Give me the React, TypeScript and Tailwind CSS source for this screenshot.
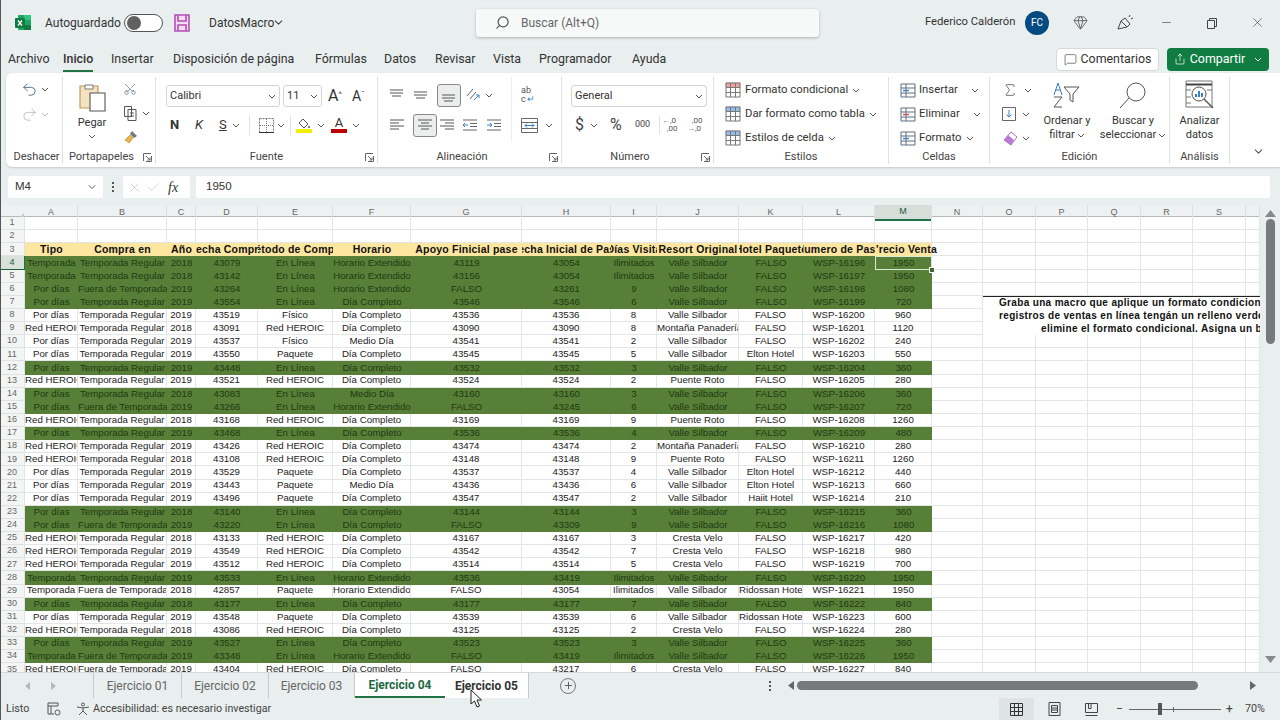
import React from "react";
import { Search, Undo2, Redo2, Scissors, Gem, Minus, X, Check, Sigma, ChevronDown, MessageSquare, Share, Plus } from "lucide-react";

const Ch = ({ c = "#555" }: { c?: string }) => (
  <svg width="8" height="5" viewBox="0 0 8 5" className="shrink-0"><path d="M1 1l3 3 3-3" fill="none" stroke={c} strokeWidth="1" /></svg>
);

const Lines = ({ w, xs, ys, c = "#555" }: { w: number[]; xs: number[]; ys: number[]; c?: string }) => (
  <svg width="16" height="16" viewBox="0 0 16 16">
    {ys.map((y, i) => <path key={i} d={`M${xs[i]} ${y}h${w[i]}`} stroke={c} strokeWidth="1" />)}
  </svg>
);

const Launcher = () => (
  <svg width="9" height="9" viewBox="0 0 9 9"><path d="M0.5 8V0.5H8M8.5 3v5.5H3M3 3l4 4M7 4.5V7H4.5" fill="none" stroke="#666" strokeWidth="1" /></svg>
);

const Group = ({ w, label, launcher, pr, children }: { w: string; label: string; launcher?: boolean; pr?: string; children?: React.ReactNode }) => (
  <div className={`${w} relative h-[87px] mt-[4px] shrink-0 flex flex-col border-r border-[#dfe3e3]`}>
    <div className="h-[73px] flex">{children}</div>
    <div className={`h-[14px] flex items-center justify-center text-[11px] text-[#444] ${pr ?? ""}`}>{label}</div>
    {launcher && <span className="absolute right-[3px] bottom-[2px] flex"><Launcher /></span>}
  </div>
);

const Sel = ({ w, text, cls }: { w: string; text: string; cls?: string }) => (
  <div className={`${w} ${cls ?? ""} h-[22px] flex items-center justify-between px-[3px] bg-white border border-[#d0d4d4] rounded-[3px] text-[11px] text-[#333]`}>
    <span>{text}</span><Ch />
  </div>
);

const colTemplate = "grid grid-cols-[25px_53px_89px_29px_62px_75px_78px_111px_89px_46px_82px_64px_72px_57px_51px_53px_52px_53px_52px_53px_14px]";

const cols = ["A", "B", "C", "D", "E", "F", "G", "H", "I", "J", "K", "L", "M", "N", "O", "P", "Q", "R", "S", ""];
const headers = ["Tipo", "Compra en", "Año", "Fecha Compra", "Método de Compra", "Horario", "Apoyo Finicial pase", "Fecha Inicial de Pase", "Días Visita", "Resort Original", "Hotel Paquete", "Numero de Pase"];

const A: Record<string, string> = { T: "Temporada", P: "Por días", H: "Red HEROIC" };
const B: Record<string, string> = { R: "Temporada Regular", F: "Fuera de Temporada" };
const E: Record<string, string> = { E: "En Línea", X: "Físico", H: "Red HEROIC", Q: "Paquete" };
const Fc: Record<string, string> = { H: "Horario Extendido", D: "Día Completo", M: "Medio Día" };
const J: Record<string, string> = { V: "Valle Silbador", M: "Montaña Panadería", P: "Puente Roto", C: "Cresta Velo" };
const K: Record<string, string> = { F: "FALSO", E: "Elton Hotel", H: "Haiit Hotel", R: "Ridossan Hotel" };

const raw = [
  "T|R|2018|43079|E|H|43119|43054|I|V|F|16196|1950|g",
  "T|R|2018|43142|E|H|43156|43054|I|V|F|16197|1950|g",
  "P|F|2019|43264|E|H|FALSO|43261|9|V|F|16198|1080|g",
  "P|R|2019|43554|E|D|43546|43546|6|V|F|16199|720|g",
  "P|R|2019|43519|X|D|43536|43536|8|V|F|16200|960|",
  "H|R|2018|43091|H|D|43090|43090|8|M|F|16201|1120|",
  "P|R|2019|43537|X|M|43541|43541|2|V|F|16202|240|",
  "P|R|2019|43550|Q|D|43545|43545|5|V|E|16203|550|",
  "P|R|2019|43448|E|D|43532|43532|3|V|F|16204|360|g",
  "H|R|2019|43521|H|D|43524|43524|2|P|F|16205|280|",
  "P|R|2018|43083|E|M|43160|43160|3|V|F|16206|360|g",
  "P|F|2019|43266|E|H|FALSO|43245|6|V|F|16207|720|g",
  "H|R|2018|43168|H|D|43169|43169|9|P|F|16208|1260|",
  "P|R|2019|43468|E|D|43536|43536|4|V|F|16209|480|g",
  "H|R|2019|43426|H|D|43474|43474|2|M|F|16210|280|",
  "H|R|2018|43108|H|D|43148|43148|9|P|F|16211|1260|",
  "P|R|2019|43529|Q|D|43537|43537|4|V|E|16212|440|",
  "P|R|2019|43443|Q|M|43436|43436|6|V|E|16213|660|",
  "P|R|2019|43496|Q|D|43547|43547|2|V|H|16214|210|",
  "P|R|2018|43140|E|D|43144|43144|3|V|F|16215|360|g",
  "P|F|2019|43220|E|D|FALSO|43309|9|V|F|16216|1080|g",
  "H|R|2018|43133|H|D|43167|43167|3|C|F|16217|420|",
  "H|R|2019|43549|H|D|43542|43542|7|C|F|16218|980|",
  "H|R|2019|43512|H|D|43514|43514|5|C|F|16219|700|",
  "T|R|2019|43533|E|H|43536|43419|I|V|F|16220|1950|g",
  "T|F|2018|42857|Q|H|FALSO|43054|I|V|R|16221|1950|",
  "P|R|2018|43177|E|D|43177|43177|7|V|F|16222|840|g",
  "P|R|2019|43548|Q|D|43539|43539|6|V|R|16223|600|",
  "H|R|2018|43086|H|D|43125|43125|2|C|F|16224|280|",
  "P|R|2019|43527|E|D|43523|43523|3|V|F|16225|360|g",
  "T|F|2019|43348|E|H|FALSO|43419|I|V|F|16226|1950|g",
  "H|F|2019|43404|H|D|FALSO|43217|6|C|F|16227|840|",
];

const expand = (s: string) => {
  const p = s.split("|");
  return {
    green: p[13] === "g",
    cells: [A[p[0]], B[p[1]], p[2], p[3], E[p[4]], Fc[p[5]], p[6], p[7], p[8] === "I" ? "Ilimitados" : p[8], J[p[9]], K[p[10]], "WSP-" + p[11], p[12]],
  };
};

const RowHead = ({ n, active }: { n: number; active?: boolean }) => (
  <div className={`flex items-center justify-center text-[9px] border-b border-r ${active ? "bg-[#d8e2da] border-r-[#217346] text-[#1f5c38]" : "bg-[#f3f5f5] border-[#dfe2e2] text-[#666]"}`}>{n}</div>
);

const Empty = () => <div className="border-r border-b border-[#e3e6e6]" />;

const Note = ({ text, pad, top }: { text: string; pad: string; top?: boolean }) => (
  <div className={`col-span-6 overflow-hidden whitespace-nowrap flex items-center ${pad} font-bold text-[10px] tracking-[0.34px] text-[#111] ${top ? "border-t-[1.5px] border-[#222]" : ""}`}>{text}</div>
);

const Sheet = () => {
  const emptyRight = Array.from({ length: 7 });
  return (
    <div className="w-[1260px] h-[467px] overflow-hidden bg-white [font-family:'Liberation_Sans',sans-serif] text-[9.7px] text-[#222]">
      <div className={`${colTemplate} h-[12px] bg-[#eef1f1] border-b-[1.5px] border-[#b5baba]`}>
        <div className="flex items-end justify-end pr-[1px] pb-[1px]"><svg width="7" height="7" viewBox="0 0 7 7"><path d="M7 0v7H0z" fill="#c5c9c9" /></svg></div>
        {cols.map((c, i) => (
          <div key={i} className={`flex items-center justify-center text-[9px] border-r border-[#dde0e0] ${c === "M" ? "bg-[#d5ded8] text-[#1f5c38] border-b-2 border-b-[#217346]" : "text-[#666]"}`}>{c}</div>
        ))}
      </div>
      <div className={`${colTemplate} auto-rows-[13.13px]`}>
        {[1, 2].map((n) => (
          <React.Fragment key={n}>
            <RowHead n={n} />
            {cols.map((_, i) => <Empty key={i} />)}
          </React.Fragment>
        ))}
        <RowHead n={3} />
        {headers.map((h) => (
          <div key={h} className="bg-[#fde6a0] overflow-hidden whitespace-nowrap flex items-center justify-center font-bold text-[10.5px] tracking-[0.2px] text-[#111]">{h}</div>
        ))}
        <div className="bg-[#fde6a0] whitespace-nowrap flex items-center pl-[1px] font-bold text-[10.5px] tracking-[0.2px] text-[#111]">'recio Venta</div>
        {emptyRight.map((_, i) => <Empty key={i} />)}
        {raw.map((s, r) => {
          const n = r + 4;
          const { green, cells } = expand(s);
          return (
            <React.Fragment key={n}>
              <RowHead n={n} active={n === 4} />
              {cells.map((c, i) => {
                const active = n === 4 && i === 12;
                return (
                  <div key={i} className={`relative flex items-center [justify-content:safe_center] whitespace-nowrap ${active ? "" : "overflow-hidden"} ${green ? "bg-[#587f38] text-[#1f3a12]" : "bg-white border-r border-b border-[#e3e6e6]"}`}>
                    {c}
                    {active && (
                      <>
                        <span className="absolute inset-0 border-[1.5px] border-[#dcecd4]" />
                        <span className="absolute z-10 -right-[3px] -bottom-[3px] w-[6px] h-[6px] bg-[#3c6a30] border border-white" />
                      </>
                    )}
                  </div>
                );
              })}
              {n === 7 ? (
                <>
                  <Empty />
                  <Note top pad="pl-[16px]" text="Graba una macro que aplique un formato condicional de forma que los" />
                </>
              ) : n === 8 ? (
                <>
                  <Empty />
                  <Note pad="pl-[16px]" text="registros de ventas en línea tengán un relleno verde oscuro y que" />
                </>
              ) : n === 9 ? (
                <>
                  <Empty />
                  <Note pad="pl-[58px]" text="elimine el formato condicional. Asigna un botón" />
                </>
              ) : (
                emptyRight.map((_, i) => <Empty key={i} />)
              )}
            </React.Fragment>
          );
        })}
      </div>
    </div>
  );
};

const TitleBar = () => (
  <div className="h-[45px] flex items-center text-[12px] text-[#333]">
    <div className="w-[45px] pl-[15px] flex">
      <svg width="16" height="17" viewBox="0 0 16 17">
        <rect x="3" y="1" width="13" height="15" rx="1" fill="#21a366" />
        <rect x="9" y="1" width="7" height="5" fill="#33c481" />
        <rect x="9" y="11" width="7" height="5" fill="#107c41" />
        <rect x="0" y="4" width="10" height="10" rx="1" fill="#107c41" />
        <path d="M3 6.5l4 5M7 6.5l-4 5" stroke="#fff" strokeWidth="1.3" />
      </svg>
    </div>
    <div className="w-[79px]">Autoguardado</div>
    <div className="w-[39px] h-[18px] rounded-full border border-[#555] bg-white flex items-center pl-[2px]">
      <span className="w-[14px] h-[14px] rounded-full bg-[#606060]" />
    </div>
    <div className="ml-[11px] w-[35px] flex">
      <svg width="16" height="18" viewBox="0 0 16 18" fill="none" stroke="#b44fb4" strokeWidth="1.6">
        <path d="M1 1h14v16H1z" fill="#f3dcf3" />
        <path d="M4 1v6h8V1M4 17v-6h8v6" />
      </svg>
    </div>
    <div className="w-[69px]">DatosMacro</div>
    <ChevronDown size={13} color="#444" className="-ml-[6px]" />
    <div className="ml-[191px] w-[343px] h-[28px] bg-[#f7f9f9] rounded-[3px] shadow-[0_1px_3px_rgba(0,0,0,0.25)] flex items-center pl-[19px] text-[#666]">
      <Search size={15} color="#555" className="-scale-x-100" />
      <span className="ml-[11px]">Buscar (Alt+Q)</span>
    </div>
    <div className="ml-[106px] w-[100px] text-[11.2px]">Federico Calderón</div>
    <div className="w-[24px] h-[24px] rounded-full bg-[#054a80] text-white text-[10px] flex items-center justify-center">FC</div>
    <div className="ml-[24px] w-[43px] flex"><Gem size={15} color="#444" strokeWidth={1.2} /></div>
    <div className="w-[44px] flex">
      <svg width="18" height="18" viewBox="0 0 18 18" fill="none" stroke="#444" strokeWidth="1"><path d="M2 15l3-8 6 6zM5 7l4-3 5 6-3 3M13 3l1-2M15 5l2-1" /></svg>
    </div>
    <div className="w-[46px] flex"><Minus size={13} color="#444" strokeWidth={1.2} /></div>
    <div className="w-[44px] flex">
      <svg width="12" height="12" viewBox="0 0 12 12" fill="none" stroke="#444" strokeWidth="1"><path d="M1.5 3.5h7v8h-7zM3.5 3.5v-2h7v8h-2" /></svg>
    </div>
    <div className="flex"><X size={15} color="#444" strokeWidth={1.1} /></div>
  </div>
);

const tabs: [string, string][] = [
  ["Archivo", "w-[55px]"], ["Inicio", "w-[48px]"], ["Insertar", "w-[62px]"], ["Disposición de página", "w-[142px]"], ["Fórmulas", "w-[69px]"],
  ["Datos", "w-[51px]"], ["Revisar", "w-[58px]"], ["Vista", "w-[46px]"], ["Programador", "w-[93px]"], ["Ayuda", "w-[45px]"],
];

const TabBar = () => (
  <div className="h-[28px] flex items-center pl-[8px] text-[12.4px] text-[#333]">
    {tabs.map(([t, w]) => (
      <div key={t} className={`${w} h-full flex items-center relative`}>
        <span className={t === "Inicio" ? "border-b-2 border-[#217346] pb-[2px] mt-[4px] font-medium" : ""}>{t}</span>
      </div>
    ))}
    <div className="ml-auto w-[103px] h-[23px] bg-white border border-[#d5d9d9] rounded-[4px] flex items-center justify-center gap-[4px]">
      <MessageSquare size={13} color="#444" strokeWidth={1.2} /><span>Comentarios</span>
    </div>
    <div className="ml-[8px] mr-[11px] w-[102px] h-[23px] bg-[#107c41] text-white rounded-[4px] flex items-center justify-center gap-[4px]">
      <Share size={12} color="#fff" strokeWidth={1.4} /><span>Compartir</span><span className="ml-[5px] flex"><Ch c="#fff" /></span>
    </div>
  </div>
);

const ICol = ({ children, cls }: { children: React.ReactNode; cls?: string }) => <div className={`flex flex-col ${cls ?? ""}`}>{children}</div>;

const Ribbon = () => (
  <div className="ml-[6px] h-[94px] bg-white rounded-l-[6px] shadow-[0_1px_2px_rgba(0,0,0,0.15)] flex text-[11px] text-[#333] shrink-0">
    <Group w="w-[57px]" label="Deshacer" pr="pl-[5px]">
      <ICol cls="pl-[15px]">
        <div className="h-[22px] mt-[1px] flex items-center gap-[3px]"><Undo2 size={17} color="#44627a" strokeWidth={1.2} /><Ch /></div>
        <div className="h-[22px] mt-[3px] flex items-center gap-[3px]"><Redo2 size={17} color="#b5b9b9" strokeWidth={1.2} /><Ch c="#bbb" /></div>
      </ICol>
    </Group>
    <Group w="w-[93px]" label="Portapapeles" launcher pr="pr-[15px]">
      <div className="w-[58px] flex flex-col items-center">
        <svg width="27" height="30" viewBox="0 0 27 30" fill="none" className="mt-[5px]">
          <path d="M1 4h18v22H1z" fill="#f5e3c0" stroke="#c09a5c" strokeWidth="1.2" />
          <path d="M6 3h8v4H6z" fill="#fff" stroke="#777" />
          <path d="M11 11h15v18H11z" fill="#fff" stroke="#555" strokeWidth="1.1" />
        </svg>
        <span className="mt-[3px]">Pegar</span>
        <span className="mt-[2px] flex"><Ch /></span>
      </div>
      <ICol cls="pl-[2px] items-start">
        <div className="h-[24px] flex items-center"><Scissors size={14} color="#5a6e82" strokeWidth={1.2} className="-rotate-90" /></div>
        <div className="h-[24px] flex items-center gap-[4px]">
          <svg width="15" height="16" viewBox="0 0 15 16" fill="none" stroke="#555"><path d="M1.5 1.5h7v10h-7zM5 4.5h8v11H5z" fill="#fff" /><path d="M7 8h4M7 11h4" /></svg>
          <Ch />
        </div>
        <div className="h-[24px] flex items-center">
          <svg width="16" height="16" viewBox="0 0 16 16"><path d="M9 2l5 5-3 2-4-4z" fill="#777" /><path d="M7 6l3 3-4 5-4-3z" fill="#e8b84a" stroke="#a9802c" strokeWidth=".6" /></svg>
        </div>
      </ICol>
    </Group>
    <Group w="w-[222px]" label="Fuente" launcher>
      <ICol cls="pl-[10px]">
        <div className="mt-[8px] h-[22px] flex items-center">
          <Sel w="w-[114px]" text="Calibri" />
          <Sel w="w-[39px]" text="11" cls="ml-[3px]" />
          <span className="ml-[6px] w-[24px] text-[16px] text-[#333] leading-none">A<sup className="text-[8px]">^</sup></span>
          <span className="text-[14px] text-[#333] leading-none">A<sup className="text-[8px]">ˇ</sup></span>
        </div>
        <div className="mt-[7px] h-[22px] flex items-center text-[13px] text-[#333]">
          <span className="w-[25px] pl-[4px] font-bold">N</span>
          <span className="w-[25px] pl-[4px] italic">K</span>
          <span className="w-[16px] pl-[3px] underline">S</span><span className="w-[15px] flex"><Ch /></span>
          <span className="w-[10px] h-[20px] border-l border-[#dfe3e3] ml-[2px]" />
          <svg width="15" height="15" viewBox="0 0 15 15" fill="none" stroke="#777"><path d="M.5.5h14v14H.5z" strokeDasharray="2 1" /><path d="M7.5 1v13M1 7.5h13" strokeDasharray="1 1" /><path d="M0 14.5h15" stroke="#333" /></svg>
          <span className="ml-[3px] w-[13px] flex"><Ch /></span>
          <span className="w-[6px] h-[20px] border-l border-[#dfe3e3]" />
          <span className="flex flex-col items-center w-[16px]">
            <svg width="14" height="11" viewBox="0 0 14 11" fill="none" stroke="#555"><path d="M6 1l5 5-4 4-5-5z" /><path d="M12 8v2" strokeWidth="1.5" /></svg>
            <span className="w-[16px] h-[4px] bg-[#f3f000]" />
          </span>
          <span className="ml-[5px] w-[14px] flex"><Ch /></span>
          <span className="flex flex-col items-center w-[16px] leading-none">
            <span className="text-[13px] leading-[12px]">A</span>
            <span className="w-[16px] h-[4px] bg-[#c00000]" />
          </span>
          <span className="ml-[5px] flex"><Ch /></span>
        </div>
      </ICol>
    </Group>
    <Group w="w-[184px]" label="Alineación" launcher pr="pr-[15px]">
      <ICol cls="pl-[11px] w-[134px] border-r border-[#eceeee] h-[65px]">
        <div className="mt-[7px] h-[22px] flex items-center">
          <span className="w-[24px] flex"><Lines w={[13, 13, 9]} xs={[1, 1, 3]} ys={[3, 6, 9]} /></span>
          <span className="w-[24px] flex"><Lines w={[13, 13, 9]} xs={[1, 1, 3]} ys={[5, 8, 11]} /></span>
          <span className="w-[24px] h-[23px] flex items-center justify-center bg-[#eceeee] border border-[#888] rounded-[3px]"><Lines w={[13, 13, 9]} xs={[1, 1, 3]} ys={[8, 11, 14]} /></span>
          <span className="ml-[4px] w-[20px] flex">
            <svg width="16" height="16" viewBox="0 0 16 16" fill="none" stroke="#666"><path d="M2 9l6-7M5 12l6-7" /><path d="M9 13l5-5M14 8v3M14 8h-3" stroke="#3a80c4" /></svg>
          </span>
          <Ch />
        </div>
        <div className="mt-[8px] h-[22px] flex items-center">
          <span className="w-[24px] flex"><Lines w={[14, 9, 14, 9]} xs={[1, 1, 1, 1]} ys={[3, 6, 9, 12]} /></span>
          <span className="w-[24px] h-[23px] flex items-center justify-center bg-[#eceeee] border border-[#888] rounded-[3px]"><Lines w={[14, 8, 14, 8]} xs={[1, 4, 1, 4]} ys={[3, 6, 9, 12]} /></span>
          <span className="w-[24px] pl-[2px] flex"><Lines w={[14, 9, 14, 9]} xs={[1, 6, 1, 6]} ys={[3, 6, 9, 12]} /></span>
          <span className="w-[25px] pl-[1px] flex">
            <svg width="16" height="16" viewBox="0 0 16 16" fill="none" stroke="#666"><path d="M1 3h14M8 6.5h7M8 9.5h7M1 13h14" /><path d="M6 8H1M3 6L1 8l2 2" stroke="#3a80c4" /></svg>
          </span>
          <span className="flex">
            <svg width="16" height="16" viewBox="0 0 16 16" fill="none" stroke="#666"><path d="M1 3h14M8 6.5h7M8 9.5h7M1 13h14" /><path d="M1 8h5M4 6l2 2-2 2" stroke="#3a80c4" /></svg>
          </span>
        </div>
      </ICol>
      <ICol cls="pl-[9px]">
        <div className="mt-[7px] h-[22px] flex flex-col items-start justify-center text-[9px] leading-[9px] text-[#555]">
          <span>ab</span>
          <span className="flex items-center gap-[1px]">c<span className="text-[#3a80c4]">↵</span></span>
        </div>
        <div className="mt-[8px] h-[22px] flex items-center gap-[7px]">
          <svg width="17" height="15" viewBox="0 0 17 15" fill="none" stroke="#666"><path d="M.5.5h16v14H.5zM.5 4.5h16M.5 10.5h16" /><path d="M4 7.5h9M6 5.5l-2 2 2 2M11 5.5l2 2-2 2" stroke="#3a80c4" /></svg>
          <Ch />
        </div>
      </ICol>
    </Group>
    <Group w="w-[152px]" label="Número" launcher pr="pr-[15px]">
      <ICol cls="pl-[9px]">
        <div className="mt-[8px] h-[22px] flex"><Sel w="w-[136px]" text="General" /></div>
        <div className="mt-[7px] h-[22px] flex items-center text-[#444]">
          <span className="w-[19px] pl-[4px] text-[16px]">$</span>
          <span className="w-[20px] flex"><Ch /></span>
          <span className="w-[25px] text-[16px]">%</span>
          <span className="w-[25px] text-[9px] border-r border-[#dfe3e3] h-[18px] flex items-center">000</span>
          <span className="ml-[2px] w-[25px] flex flex-col text-[8px] leading-[8px] text-[#555]">
            <span><span className="text-[#3a80c4]">←</span>,0</span>
            <span className="pl-[5px]">,00</span>
          </span>
          <span className="flex flex-col text-[8px] leading-[8px] text-[#555]">
            <span className="pl-[5px]">,00</span>
            <span><span className="text-[#3a80c4]">→</span>,0</span>
          </span>
        </div>
      </ICol>
    </Group>
    <Group w="w-[175px]" label="Estilos">
      <ICol cls="pl-[11px] pt-[1px]">
        {[
          { t: "Formato condicional", c: "#c8504a" },
          { t: "Dar formato como tabla", c: "#3a80c4" },
          { t: "Estilos de celda", c: "#3a80c4" },
        ].map(({ t, c }) => (
          <div key={t} className="h-[24.5px] flex items-center text-[11.3px] text-[#333] gap-[4px]">
            <svg width="16" height="16" viewBox="0 0 16 16" fill="none" stroke="#777"><path d="M1 1h14v14H1z" fill="#fff" /><path d="M1 5.5h14M1 10.5h14M5.5 1v14M10.5 1v14" /><path d="M1 1h14v4.500H1z" fill={c} opacity=".5" /></svg>
            <span>{t}</span>
            <Ch />
          </div>
        ))}
      </ICol>
    </Group>
    <Group w="w-[101px]" label="Celdas">
      <ICol cls="pl-[11px] pt-[1px] w-full">
        {[
          { t: "Insertar", c: "#3a80c4", ch: "ml-[10px]" },
          { t: "Eliminar", c: "#c8504a", ch: "ml-[10px]" },
          { t: "Formato", c: "#3a80c4", ch: "ml-[2px]" },
        ].map(({ t, c, ch }) => (
          <div key={t} className="h-[24.5px] flex items-center text-[11.3px] text-[#333] gap-[3px]">
            <svg width="16" height="15" viewBox="0 0 16 15" fill="none" stroke="#5a6e82"><path d="M1 1h14v13H1zM1 5h14M1 10h14M6 1v13" /><path d="M3 7.500h6" stroke={c} strokeWidth="1.4" /></svg>
            <span>{t}</span>
            <span className={`${ch} flex`}><Ch /></span>
          </div>
        ))}
      </ICol>
    </Group>
    <Group w="w-[180px]" label="Edición">
      <ICol cls="pl-[12px] pt-[1px] w-[46px]">
        <div className="h-[24.5px] flex items-center gap-[6px]"><Sigma size={16} color="#444" strokeWidth={1.1} /><Ch /></div>
        <div className="h-[24.5px] flex items-center gap-[6px]">
          <svg width="14" height="14" viewBox="0 0 14 14" fill="none" stroke="#666"><path d="M.5.5h13v13H.5z" /><path d="M7 3v7M4.500 7.500L7 10l2.500-2.500" stroke="#3a80c4" /></svg>
          <Ch />
        </div>
        <div className="h-[24.5px] flex items-center gap-[4px]">
          <svg width="16" height="15" viewBox="0 0 16 15"><path d="M9 1l6 5-6 8-7-5z" fill="#fff" stroke="#a86cc8" /><path d="M2 9l4-5 6 5-3 5z" fill="#b97ad6" /></svg>
          <Ch />
        </div>
      </ICol>
      <div className="w-[62px] flex flex-col items-center">
        <svg width="30" height="28" viewBox="0 0 30 28" fill="none" className="mt-[4px]">
          <path d="M2 14l4-12 4 12M3.500 9h5" stroke="#3a80c4" />
          <path d="M2 16h8L2 26h8" stroke="#555" />
          <path d="M12 6h15l-6 7v8l-3-2v-6z" stroke="#555" />
        </svg>
        <span className="mt-[5px] leading-[14px] text-[11px]">Ordenar y</span>
        <span className="leading-[14px] text-[11px] flex items-center gap-[2px]">filtrar <Ch /></span>
      </div>
      <div className="w-[70px] flex flex-col items-center">
        <svg width="30" height="28" viewBox="0 0 30 28" fill="none" className="mt-[4px]" stroke="#555"><circle cx="18" cy="11" r="9" /><path d="M11 17L2 27" /></svg>
        <span className="mt-[5px] leading-[14px] text-[11px]">Buscar y</span>
        <span className="leading-[14px] text-[11px] flex items-center gap-[2px]">seleccionar <Ch /></span>
      </div>
    </Group>
    <Group w="w-[60px]" label="Análisis">
      <div className="w-full flex flex-col items-center">
        <svg width="30" height="30" viewBox="0 0 30 30" fill="none" className="mt-[3px]" stroke="#777">
          <path d="M1 1h26v26H1z" /><path d="M1 4.500h26" stroke="#444" strokeWidth="2" />
          <path d="M1 10h5M1 17h5M1 23h5M22 10h5" />
          <circle cx="14" cy="14" r="7" stroke="#555" fill="#fff" />
          <path d="M11 17v-3M14 17v-6M17 17v-4" stroke="#3a80c4" strokeWidth="2" />
          <path d="M19 19l9 9" stroke="#555" strokeWidth="1.4" />
        </svg>
        <span className="mt-[4px] leading-[14px] text-[11px]">Analizar</span>
        <span className="leading-[14px] text-[11px]">datos</span>
      </div>
    </Group>
    <div className="flex-1 flex items-end justify-end pr-[15px] pb-[9px]"><ChevronDown size={13} color="#555" /></div>
  </div>
);

const FormulaBar = () => (
  <div className="mt-[9px] h-[22px] flex items-center [font-family:'Liberation_Sans',sans-serif] text-[#333] shrink-0">
    <div className="ml-[8px] w-[95px] h-full bg-white rounded-[2px] flex items-center justify-between pl-[7px] pr-[5px] text-[11.5px]">
      <span>M4</span><ChevronDown size={12} color="#555" />
    </div>
    <div className="w-[20px] flex flex-col items-center gap-[2px]">
      <span className="w-[2px] h-[2px] bg-[#555]" /><span className="w-[2px] h-[2px] bg-[#555]" /><span className="w-[2px] h-[2px] bg-[#555]" />
    </div>
    <div className="w-[67px] h-full bg-white rounded-[2px] flex items-center pl-[4px] gap-[4px]">
      <X size={15} color="#bcc0c0" strokeWidth={1.1} />
      <Check size={15} color="#bcc0c0" strokeWidth={1.1} />
      <span className="ml-[3px] [font-family:'Liberation_Serif',serif] italic text-[14px]">fx</span>
    </div>
    <div className="ml-[6px] w-[1074px] h-full bg-white rounded-[2px] flex items-center pl-[10px] text-[11.5px]">1950</div>
  </div>
);

const VScroll = () => (
  <div className="flex-1 flex flex-col items-center">
    <svg width="11" height="7" viewBox="0 0 11 7" className="mt-[5px]"><path d="M5.500 0L11 7H0z" fill="#888" /></svg>
    <div className="mt-[2px] w-[9px] h-[125px] bg-[#767a7a] rounded-full" />
    <svg width="11" height="7" viewBox="0 0 11 7" className="mt-[312px]"><path d="M5.500 7L11 0H0z" fill="#888" /></svg>
  </div>
);

const sheetTabs: [string, string][] = [["Ejercicio 01", "w-[88px]"], ["Ejercicio 02", "w-[87px]"], ["Ejercicio 03", "w-[86px]"]];

const SheetTabs = () => (
  <div className="h-[26px] flex items-stretch text-[12px] text-[#666] shrink-0 border-t border-[#d5d9d9]">
    <div className="w-[94px] flex items-center border-r border-[#c5caca]">
      <svg width="5" height="8" viewBox="0 0 5 8" className="ml-[25px]"><path d="M5 0v8L0 4z" fill="#b5b9b9" /></svg>
      <svg width="5" height="8" viewBox="0 0 5 8" className="ml-[21px]"><path d="M0 0v8l5-4z" fill="#b5b9b9" /></svg>
    </div>
    {sheetTabs.map(([t, w]) => (
      <div key={t} className={`${w} flex items-center justify-center border-r border-[#c5caca]`}>{t}</div>
    ))}
    <div className="w-[90px] bg-white flex items-center justify-center font-bold text-[#1d6b42] border-b-2 border-[#217346]">Ejercicio 04</div>
    <div className="w-[84px] bg-white flex items-center justify-center font-bold text-[#333] border-r border-[#c5caca]">Ejercicio 05</div>
    <div className="ml-[31px] w-[16px] h-[16px] self-center rounded-full border border-[#777] flex items-center justify-center"><Plus size={11} color="#555" /></div>
    <div className="ml-[193px] flex flex-col gap-[2px] self-center">
      <span className="w-[2px] h-[2px] bg-[#555]" /><span className="w-[2px] h-[2px] bg-[#555]" /><span className="w-[2px] h-[2px] bg-[#555]" />
    </div>
    <div className="ml-[17px] w-[483px] flex items-center">
      <svg width="6" height="9" viewBox="0 0 6 9"><path d="M6 0v9L0 4.500z" fill="#666" /></svg>
      <div className="ml-[3px] w-[401px] h-[9px] bg-[#767a7a] rounded-full" />
      <svg width="6" height="9" viewBox="0 0 6 9" className="ml-[52px]"><path d="M0 0v9l6-4.500z" fill="#666" /></svg>
    </div>
  </div>
);

const StatusBar = () => (
  <div className="h-[22px] flex items-center text-[10.7px] text-[#444] shrink-0">
    <span className="ml-[6px] w-[41px]">Listo</span>
    <svg width="14" height="14" viewBox="0 0 14 14" fill="none" stroke="#555" className="mr-[15px]"><path d="M1 1h10v3H1zM1 4v8h6M4 4v8" /><circle cx="10.500" cy="10.500" r="2.500" /></svg>
    <svg width="14" height="14" viewBox="0 0 14 14" fill="none" stroke="#555" className="mr-[3px]"><circle cx="7" cy="2.500" r="1.500" /><path d="M1 5l6 1 6-1M7 6v3M3 13l4-4 4 4" /></svg>
    <span className="w-[178px] whitespace-nowrap">Accesibilidad: es necesario investigar</span>
    <div className="ml-[728px] w-[35px] h-[22px] bg-[#dfe3e3] flex items-center justify-center">
      <svg width="13" height="13" viewBox="0 0 13 13" fill="none" stroke="#333"><path d="M.5.5h12v12H.5zM4.500.5v12M8.500.5v12M.5 4.500h12M.5 8.500h12" /></svg>
    </div>
    <div className="ml-[14px] flex"><svg width="13" height="14" viewBox="0 0 13 14" fill="none" stroke="#444"><path d="M1 .5h11v13H1zM3.500 3.500h6v7h-6zM3.500 6h6M3.500 8h6" /></svg></div>
    <div className="ml-[24px] flex"><svg width="13" height="13" viewBox="0 0 13 13" fill="none" stroke="#444"><path d="M.5 9.500V.5h12v9M.5 9.500h12M3.500.5v5h2.500v-5M.5 12.500h12" /></svg></div>
    <span className="ml-[18px] w-[7px] text-[#444] text-[12px]">−</span>
    <div className="ml-[6px] w-[92px] h-[1px] bg-[#666] flex items-center">
      <span className="ml-[29px] w-[4px] h-[12px] bg-[#555]" />
      <span className="ml-[11px] w-[1px] h-[5px] bg-[#666]" />
    </div>
    <span className="ml-[5px] w-[8px] text-[#444] text-[12px]">+</span>
    <span className="ml-[11px]">70%</span>
  </div>
);

export default function App() {
  return (
    <div className="relative w-[1280px] h-[720px] overflow-hidden flex flex-col bg-[#e9eeee] [font-family:Roboto,sans-serif]">
      <TitleBar />
      <TabBar />
      <Ribbon />
      <FormulaBar />
      <div className="mt-[7px] h-[467px] flex shrink-0">
        <Sheet />
        <VScroll />
      </div>
      <SheetTabs />
      <StatusBar />
      <svg width="13" height="19" viewBox="0 0 13 19" className="absolute left-[470px] top-[689px]">
        <path d="M1 1v14l3.500-3 2.500 6 2.500-1-2.500-6h4.500z" fill="#fff" stroke="#222" />
      </svg>
      <span className="absolute left-0 top-0 w-[1px] h-full bg-[#555]" />
    </div>
  );
}
